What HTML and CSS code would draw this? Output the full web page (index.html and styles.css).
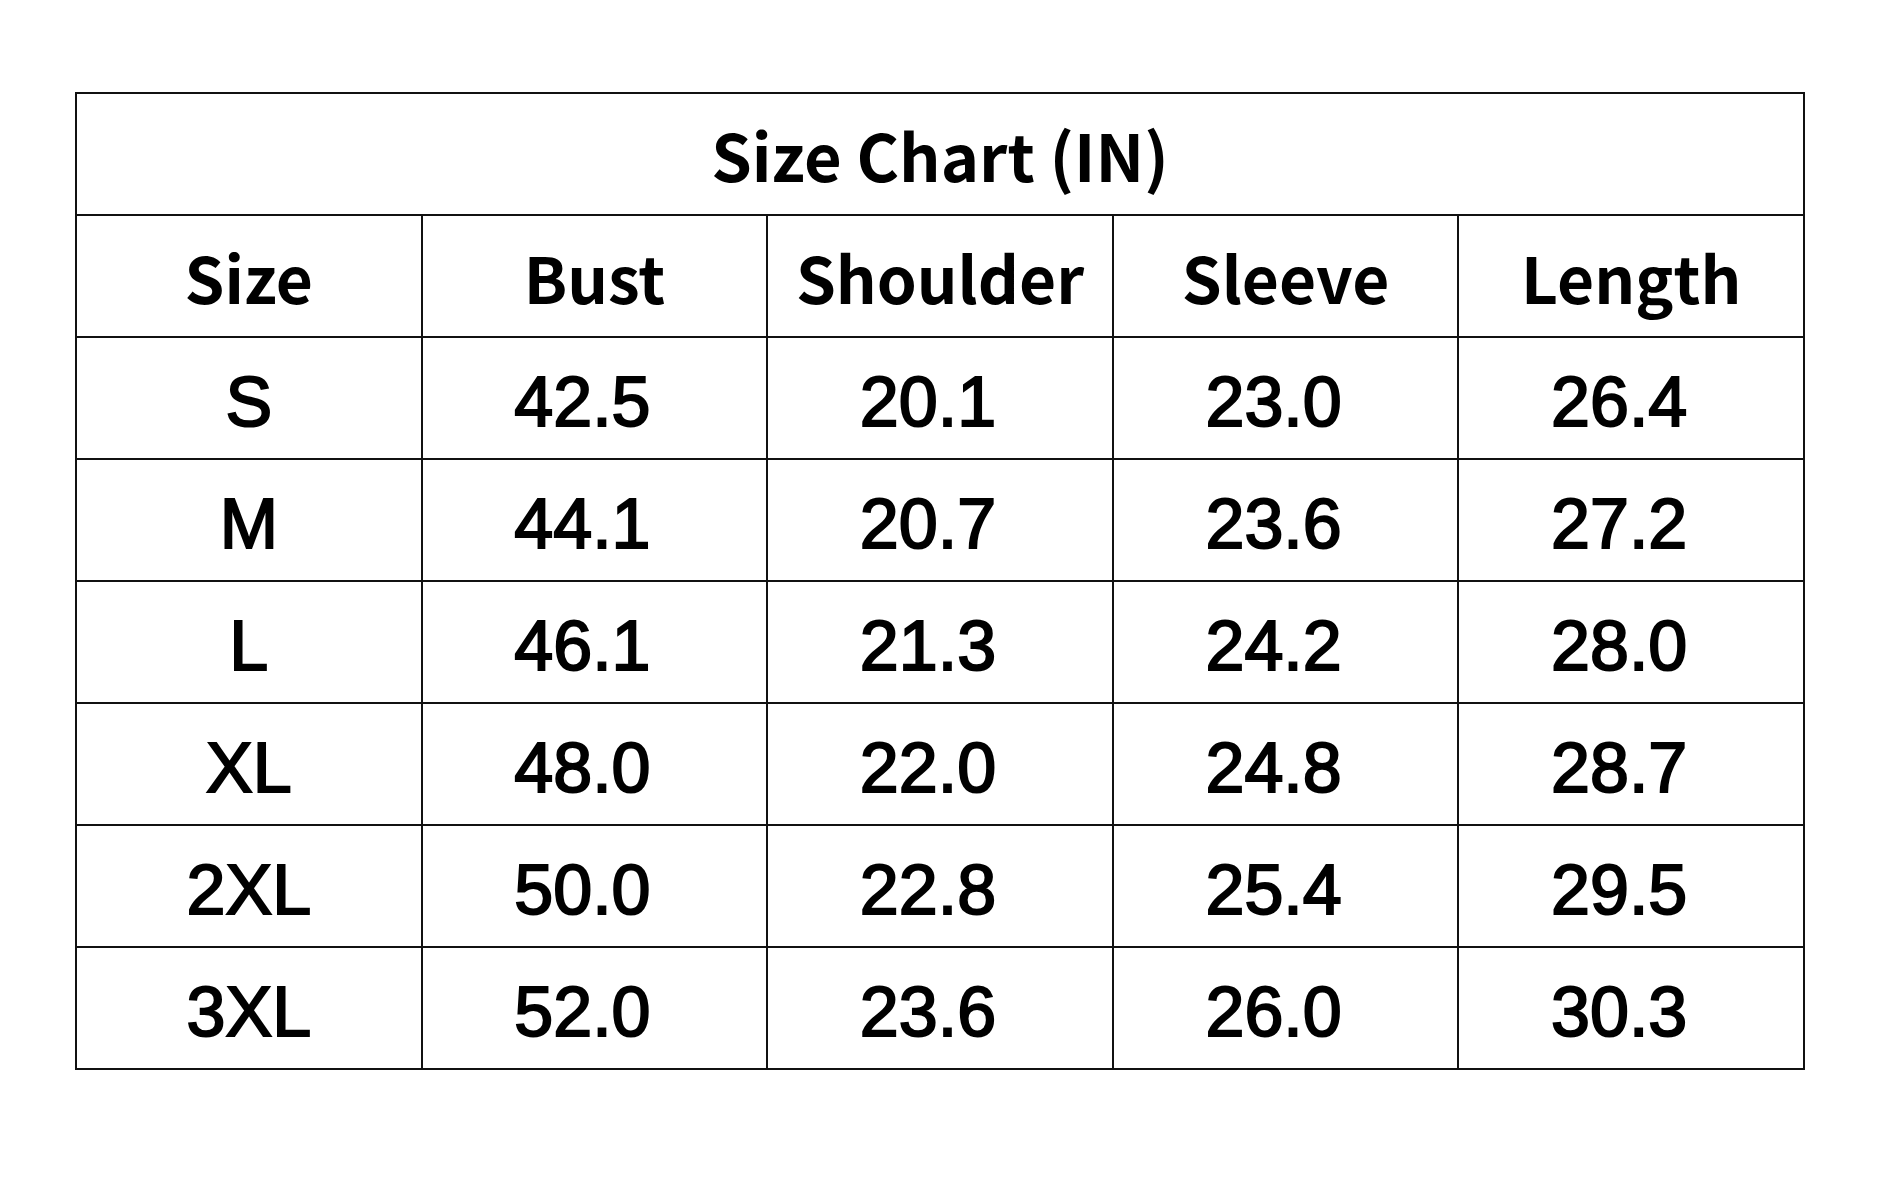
FILE: index.html
```html
<!DOCTYPE html>
<html>
<head>
<meta charset="utf-8">
<link rel="stylesheet" href="styles.css">
</head>
<body>
<div class="page">
<table class="chart">
<tr class="title-row"><th colspan="5" class="title">Size Chart (IN)</th></tr>
<tr class="head-row"><th>Size</th><th>Bust</th><th>Shoulder</th><th>Sleeve</th><th>Length</th></tr>
<tr><td class="sz">S</td><td>42.5</td><td>20.1</td><td>23.0</td><td>26.4</td></tr>
<tr><td class="sz">M</td><td>44.1</td><td>20.7</td><td>23.6</td><td>27.2</td></tr>
<tr><td class="sz">L</td><td>46.1</td><td>21.3</td><td>24.2</td><td>28.0</td></tr>
<tr><td class="sz">XL</td><td>48.0</td><td>22.0</td><td>24.8</td><td>28.7</td></tr>
<tr><td class="sz">2XL</td><td>50.0</td><td>22.8</td><td>25.4</td><td>29.5</td></tr>
<tr><td class="sz">3XL</td><td>52.0</td><td>23.6</td><td>26.0</td><td>30.3</td></tr>
</table>
</div>
</body>
</html>
```
FILE: styles.css
```css
html, body {
  margin: 0;
  padding: 0;
  background: #ffffff;
}
.page {
  padding: 92px 0 0 75px;
}
.chart {
  border-collapse: collapse;
  width: 1730px;
  table-layout: fixed;
  color: #000;
}
.chart th, .chart td {
  border: 2px solid #111;
  height: 120px;
  padding: 0;
  text-align: center;
  vertical-align: middle;
  font-family: "Noto Sans CJK SC", "Noto Sans", sans-serif;
  font-weight: 700;
  font-size: 64px;
  line-height: 1;
}
.chart td {
  font-family: "Liberation Sans", Arial, sans-serif;
  font-weight: 400;
  font-size: 70px;
  -webkit-text-stroke: 2px #000;
  height: 112px;
  padding: 8px 24px 0 0;
}
.chart td.sz {
  padding: 8px 0 0 0;
}
.chart th.title {
  font-size: 65px;
}
```
